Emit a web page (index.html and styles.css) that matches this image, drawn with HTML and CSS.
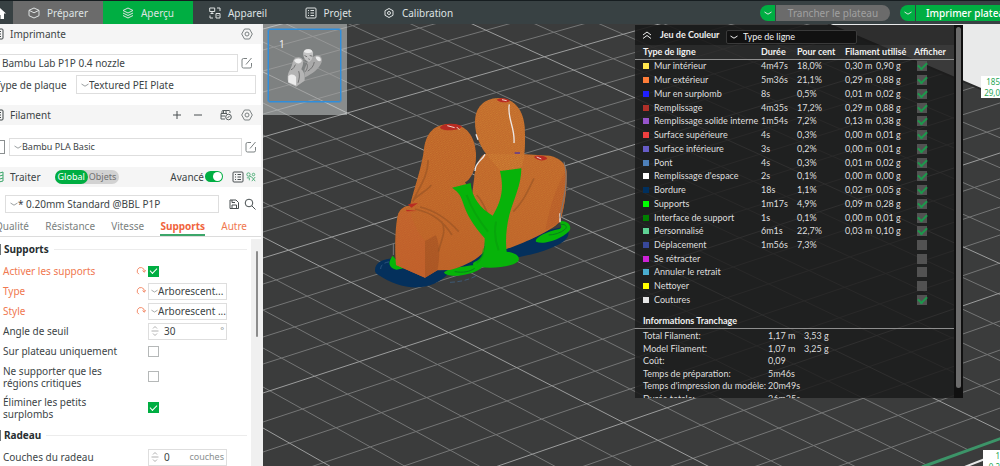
FILE: index.html
```html
<!DOCTYPE html>
<html lang="fr">
<head>
<meta charset="utf-8">
<title>Aperçu</title>
<link rel="stylesheet" href="styles.css">
</head>
<body>
<svg class="defs" aria-hidden="true">
  <symbol id="chev" viewBox="0 0 8 8"><path d="M.5 3 4 5.200 7.500 3" /></symbol>
  <symbol id="gear" viewBox="0 0 12 12"><path d="M3.500 1h5L11.300 6 8.500 11h-5L.7 6z"/><circle cx="6" cy="6" r="2"/></symbol>
  <symbol id="edit" viewBox="0 0 12 12"><path d="M6 1.500H2.500a1.500 1.500 0 0 0-1.500 1.500v6.500A1.500 1.500 0 0 0 2.500 11H9a1.500 1.500 0 0 0 1.500-1.500V6M5 7.500 10.500 1"/></symbol>
  <symbol id="reset" viewBox="0 0 12 12"><path d="M3.500 9.800A4.300 4.300 0 1 1 10 6.500M7.800 5.500 10 7.500l1.600-2.500"/></symbol>
  <symbol id="list" viewBox="0 0 12 12"><rect x="1" y="1" width="10" height="10" rx="1"/><path d="M3 3.500h1M5.500 3.500H9M3 6h1M5.500 6H9M3 8.500h1M5.500 8.500H9"/></symbol>
  <symbol id="spin" viewBox="0 0 8 14"><path d="M2 4.500 4 2.500l2 2M.5 7h7M2 9.500l2 2 2-2"/></symbol>
</svg>

<header class="topbar">
  <button class="home" aria-label="Accueil"><svg viewBox="0 0 14 14"><path d="M7 1 0 7.500h2V13h3.500V9h3v4H12V7.500h2z"/></svg></button>
  <nav class="tabs">
    <button class="tab visited"><svg class="ico" viewBox="0 0 12 12"><path d="M6 1 11 3.300v5.400L6 11 1 8.700V3.300zM1 3.300 6 5.800l5-2.500"/></svg>Préparer</button>
    <button class="tab active"><svg class="ico" viewBox="0 0 12 12"><path d="M6 1 11 3.500 6 6 1 3.500zM1 6l5 2.500L11 6M1 8.500 6 11l5-2.500"/></svg>Aperçu</button>
    <button class="tab"><svg class="ico" viewBox="0 0 12 12"><path d="M.7 1h5v3.500h-5zM3 4.500v2M1.500 6.500h3M8 1h3v3M1 8.500V11h3M7 6.500h4V11H7zM8.500 8.500h1"/></svg>Appareil</button>
    <button class="tab"><svg class="ico"><use href="#list"/></svg>Projet</button>
    <button class="tab"><svg class="ico" viewBox="0 0 12 12"><path d="M6 1.500 10 3.700v4.600L6 10.500 2 8.300V3.700z"/><circle cx="6" cy="6" r="1.500"/></svg>Calibration</button>
  </nav>
  <div class="actions">
    <div class="split"><button class="drop" aria-label="Options de tranchage"><svg class="ico8"><use href="#chev"/></svg></button><button class="main off">Trancher le plateau</button></div>
    <div class="split last"><button class="drop" aria-label="Options d’impression"><svg class="ico8"><use href="#chev"/></svg></button><button class="main">Imprimer plateau</button></div>
  </div>
</header>

<main class="work">
<aside class="side">
  <div class="strip">
    <svg class="ico stub"><use href="#list"/></svg><h2>Imprimante</h2>
    <button class="ib" aria-label="Réglages imprimante"><svg class="ico"><use href="#gear"/></svg></button>
  </div>
  <div class="printer">
    <div class="field open"><select aria-label="Imprimante"><option>Bambu Lab P1P 0.4 nozzle</option></select></div>
    <button class="ib" aria-label="Modifier l’imprimante"><svg class="ico"><use href="#edit"/></svg></button>
  </div>
  <div class="plate">
    <label for="plate">Type de plaque</label>
    <div class="field"><svg class="ico8"><use href="#chev"/></svg><select id="plate"><option>Textured PEI Plate</option></select></div>
  </div>
  <div class="strip">
    <svg class="ico stub"><use href="#list"/></svg><h2>Filament</h2>
    <button class="ib" aria-label="Ajouter"><svg class="ico dark" viewBox="0 0 12 12"><path d="M6 2v8M2 6h8"/></svg></button>
    <button class="ib minus" aria-label="Retirer"><svg class="ico dark" viewBox="0 0 12 12"><path d="M2 6h8"/></svg></button>
    <button class="ib" aria-label="AMS"><svg class="ico ams" viewBox="0 0 12 12"><path d="M2 5V2.500A1 1 0 0 1 3 1.500h6a1 1 0 0 1 1 1V4M1 4.500h6M1 4.500V10h4M1 7h4M3.500 2v2M6 2v2"/><circle cx="8.500" cy="8" r="2.800"/><path d="M7.500 9 9.700 6.800"/></svg></button>
    <button class="ib" aria-label="Réglages filament"><svg class="ico"><use href="#gear"/></svg></button>
  </div>
  <div class="filament">
    <span class="spool"></span>
    <div class="field"><svg class="ico8"><use href="#chev"/></svg><select aria-label="Filament"><option>Bambu PLA Basic</option></select></div>
    <button class="ib" aria-label="Modifier le filament"><svg class="ico"><use href="#edit"/></svg></button>
  </div>
  <div class="strip">
    <svg class="ico stub green" viewBox="0 0 12 12"><path d="M1 4 11 1v3L1 7M1 10l10-3V4M3 12l8-2V7"/></svg><h2>Traiter</h2>
    <div class="seg"><button class="on">Global</button><button>Objets</button></div>
    <label class="adv">Avancé<input type="checkbox" class="switch" checked></label>
    <button class="ib" aria-label="Liste"><svg class="ico dark"><use href="#list"/></svg></button>
    <button class="ib tight" aria-label="Comparer"><svg class="ico10 green" viewBox="0 0 12 12"><circle cx="3" cy="3" r="2"/><circle cx="9" cy="3" r="1.500"/><path d="M1 7h3v3M7 6l4 5M11 6 7 11M4 5l3 1"/></svg></button>
  </div>
  <div class="process">
    <div class="field"><svg class="ico8"><use href="#chev"/></svg><select aria-label="Traitement"><option>* 0.20mm Standard @BBL P1P</option></select></div>
    <button class="ib" aria-label="Enregistrer"><svg class="ico dark" viewBox="0 0 12 12"><path d="M2 2h6l2.500 2.500V10.500H2zM4 2v2.500h3M4 10.500V7h4.500v3.500"/></svg></button>
    <button class="ib" aria-label="Rechercher"><svg class="ico dark" viewBox="0 0 12 12"><circle cx="5" cy="5" r="3.800"/><path d="m7.800 7.800 3.700 3.700"/></svg></button>
  </div>
  <nav class="ptabs">
    <button>Qualité</button><button>Résistance</button><button>Vitesse</button><button class="cur">Supports</button><button class="mod">Autre</button>
  </nav>
  <div class="params">
    <div class="plist">
      <h3>Supports</h3>
      <div class="row mod"><label for="p1">Activer les supports</label><svg class="ico rst"><use href="#reset"/></svg><input type="checkbox" class="tick" id="p1" checked></div>
      <div class="row mod"><label for="p2">Type</label><svg class="ico rst"><use href="#reset"/></svg><div class="field"><svg class="ico8"><use href="#chev"/></svg><select id="p2"><option>Arborescent...</option></select></div></div>
      <div class="row mod"><label for="p3">Style</label><svg class="ico rst"><use href="#reset"/></svg><div class="field"><svg class="ico8"><use href="#chev"/></svg><select id="p3"><option>Arborescent ...</option></select></div></div>
      <div class="row"><label for="p4">Angle de seuil</label><div class="field"><svg class="spin"><use href="#spin"/></svg><input type="text" id="p4" value="30"><span class="unit">°</span></div></div>
      <div class="row"><label for="p5">Sur plateau uniquement</label><input type="checkbox" class="tick" id="p5"></div>
      <div class="row two"><label for="p6">Ne supporter que les régions critiques</label><input type="checkbox" class="tick" id="p6"></div>
      <div class="row two"><label for="p7">Éliminer les petits surplombs</label><input type="checkbox" class="tick" id="p7" checked></div>
      <h3>Radeau</h3>
      <div class="row"><label for="p8">Couches du radeau</label><div class="field"><svg class="spin"><use href="#spin"/></svg><input type="text" id="p8" value="0"><span class="unit">couches</span></div></div>
    </div>
    <div class="gutter"><i></i></div>
  </div>
</aside>

<section class="view">
  <svg class="scene" viewBox="263 24 737 442" preserveAspectRatio="xMinYMin slice" aria-hidden="true">
    <defs>
      <pattern id="layers" width="9" height="7" patternUnits="userSpaceOnUse" patternTransform="rotate(-10)"><path d="M0 1.500h5M4 5h5" stroke="#e0a040" stroke-width="2" opacity=".6"/></pattern>
      <linearGradient id="fade" x1="0" y1="0" x2="0" y2="1"><stop offset="0" stop-color="#fff"/><stop offset=".55" stop-color="#aaa"/><stop offset="1" stop-color="#222"/></linearGradient>
      <mask id="soft" maskUnits="userSpaceOnUse" x="0" y="30" width="660" height="560"><rect x="0" y="30" width="660" height="560" fill="url(#fade)"/></mask>
      <path id="torso" d="M345 260C350 235 360 215 374 207L495 208 570 212C600 220 618 235 620 260 622 320 610 380 600 410 570 440 500 470 440 492L375 480 335 340z"/>
      <path id="left" d="M150 362C165 300 185 250 192 192 198 145 222 117 270 117 320 117 345 155 348 205 350 255 330 285 315 292L345 340 378 410 372 500C350 525 310 545 270 555L232 556 195 578 108 540C104 490 105 420 115 385 122 370 135 362 150 362z"/>
      <path id="head" d="M345 110C345 70 370 40 415 39 467 39 490 80 494 125 497 175 494 220 486 245L455 258 422 258 385 215C360 185 345 150 345 110z"/>
    </defs>
    <rect x="263" y="24" width="737" height="442" fill="#3b3c3c"/>
    <path class="minor" d="M263-172 1003 139M263-148 1003 169M263-123 1003 200M263-97 1003 232M263-44 1003 296M263-16 1003 328M263 13 1003 362M263 42 1003 396M263 103 1003 467M263 135 1003 503M263 168 1003 541M263 202 1003 579M263 273 1003 661M263 310 1003 706M263 348 1003 752M263 387 1003 800"/>
    <path class="minor" d="M263 50 1003-151M263 71 1003-132M263 92 1003-113M263 114 1003-94M263 160 1003-54M263 184 1003-33M263 208 1003-12M263 232 1003 10M263 284 1003 55M263 310 1003 78M263 337 1003 102M263 364 1003 127M263 422 1003 178M263 452 1003 206M263 483 1003 234M263 514 1003 262M263 578 1003 320M263 610 1003 349M263 642 1003 378M263 674 1003 407"/>
    <path class="major" d="M263-71 1003 265M263 72 1003 432M263 237 1003 618M263 428 1003 850M263 29 1003-169M263 137 1003-74M263 258 1003 32M263 393 1003 152M263 547 1003 292"/>
    <path d="M828 24 1000 97V24z" fill="#e9eaea"/>
    <path d="M828 24 1000 97" stroke="#2a2b2b" stroke-width="2"/>
    <path d="M922 468 1002 438V468z" fill="#3b3c3c"/>
    <path d="M922 467 1002 438" stroke="#3c9468" stroke-width="3"/>
    <path d="M962 468 985 459" stroke="#e8e8e8" stroke-width="2"/>
    <g transform="translate(360 85) scale(.33333)">
      <path d="M45 555C45 533 67 521 105 519L405 479C485 469 535 439 595 429 625 426 633 441 619 461 599 485 539 503 479 516 419 524 397 514 369 536 329 554 299 558 274 558 254 578 224 606 174 607 134 609 89 592 59 572 45 564 45 560 45 555z" fill="#04305c"/>
      <path d="M62 552C62 538 76 530 96 530M270 592C310 590 330 582 350 572" stroke="#3f6690" stroke-width="2" fill="none" stroke-dasharray="14 8"/>
      <path d="M98 512C82 532 86 550 110 554L130 550zM528 470C522 458 560 440 598 432 612 428 594 412 604 408 622 408 634 420 630 434 616 456 556 482 528 470zM252 562C270 546 336 542 366 536 376 550 340 568 296 572 272 574 254 570 252 562z" fill="#06b508"/>
      <path d="M598 420C614 414 624 424 616 432 604 444 580 450 566 450M284 560C310 564 330 560 344 550" fill="none" stroke="#0a7d1c" stroke-width="3"/>
      <use href="#torso" fill="#bf652a"/>
      <use href="#head" fill="#c0682b"/>
      <use href="#left" fill="#bd6228"/>
      <path d="M118 385C108 430 106 490 108 540L195 578V468C170 440 160 410 148 375z" fill="#c05f2b"/>
      <path d="M195 468 228 450C240 480 240 520 232 556L195 578z" fill="#ab5524"/>
      <path d="M616 260C590 300 570 360 556 436L598 412C612 370 622 320 616 260z" fill="#b85c28"/>
      <g mask="url(#soft)"><use href="#torso" fill="url(#layers)"/><use href="#head" fill="url(#layers)"/><use href="#left" fill="url(#layers)"/></g>
      <path d="M204 225C206 270 176 310 158 350M160 345C180 325 200 318 214 300M165 372C220 384 250 410 276 450M180 366C230 378 270 410 296 440M245 410C262 440 240 470 236 500M522 280C502 320 490 350 460 380M350 330C370 350 374 370 388 396" stroke="#8e4d22" stroke-width="5" fill="none" opacity=".5"/>
      <path d="M240 128C246 114 290 112 306 124 300 138 250 140 240 128zM410 44C420 38 444 38 450 48 442 54 420 54 410 44zM522 216C530 208 556 212 562 220 554 230 532 228 522 216zM144 358 174 354 154 368zM138 374 172 378 140 379z" fill="#b82b22"/>
      <path d="M262 122 284 128M426 44 440 47M530 216 544 222M290 126 298 134" stroke="#efd5cc" stroke-width="3"/>
      <path d="M448 58C440 98 466 128 462 174M375 208C365 228 345 232 345 258M348 148 354 164M600 385V412" fill="none" stroke="#ece6e4" stroke-width="4"/>
      <path d="M612 230C630 290 606 350 600 400M100 474V510" fill="none" stroke="#77777a" stroke-width="3"/>
      <path d="M464 204H480" stroke="#5133a0" stroke-width="4"/>
      <path d="M276 308 332 294C336 340 362 370 398 392 430 340 430 300 420 258L484 250C484 300 462 340 448 390 438 430 436 470 440 500 466 503 480 514 476 526 466 545 400 552 360 546 335 545 335 535 345 530 370 520 374 505 374 460 340 420 320 390 308 350 300 325 290 318 276 308z" fill="#07b30a"/>
      <path d="M372 490C368 512 366 522 350 534M408 410C402 440 406 470 416 496M320 330C334 370 360 410 384 440" stroke="#089c0c" stroke-width="6" fill="none" opacity=".6"/>
    </g>
  </svg>

  <button class="thumb" aria-label="Plateau 1">
    <span class="thumb-in"><span>1</span>
      <svg viewBox="0 0 114 126" aria-hidden="true"><path d="M54 62 66 34 88 20C102 16 112 28 106 42 98 62 78 76 54 88z" fill="#a9a9a9"/><path d="M50 12C52-4 76-4 80 10 82 24 76 36 68 40 56 36 50 26 50 12z" fill="#c4c4c4"/><path d="M8 66C16 52 16 44 20 34 26 22 48 22 50 38 50 50 46 56 44 62 54 70 56 86 54 98L28 116 4 104C0 88 2 76 8 66z" fill="#b4b4b4"/><path d="M52 8C56-2 76-2 78 8 70 14 60 14 52 8zM22 36C28 26 44 28 46 36 42 46 30 48 22 36zM4 84C10 76 22 76 28 86L28 112 4 102zM88 24C98 20 106 26 104 36 96 40 90 34 88 24z" fill="#ececec"/><path d="M12 64C22 60 22 54 26 48M54 20 62 24M70 20 78 22M66 30 70 32M60 44C66 52 62 62 56 70M84 40C82 52 76 60 64 68M36 68C40 80 38 92 34 104" stroke="#707070" stroke-width="3" fill="none"/></svg>
    </span>
  </button>
  <div class="coord top"><div>185</div><div>29,0</div></div>
  <div class="coord bottom"><div>1</div><div>0,2</div></div>

  <div class="legend">
    <div class="lbody">
      <div class="lhead">
        <button class="fold" aria-label="Replier"><svg class="ico" viewBox="0 0 12 12"><path d="M2 6l4-3 4 3M2 9.500l4-3 4 3"/></svg></button>
        <label for="scheme">Jeu de Couleur</label>
        <div class="lsel"><svg class="ico8"><use href="#chev"/></svg><select id="scheme"><option>Type de ligne</option></select></div>
      </div>
      <table class="lines">
        <colgroup><col><col class="c2"><col class="c3"><col class="c4"><col class="c5"><col class="c6"></colgroup>
        <thead><tr><th>Type de ligne</th><th>Durée</th><th>Pour cent</th><th colspan="2">Filament utilisé</th><th>Afficher</th></tr></thead>
        <tbody>
        <tr><td><i class="k1"></i>Mur intérieur</td><td>4m47s</td><td>18,0%</td><td>0,30 m</td><td>0,90 g</td><td><input type="checkbox" aria-label="Mur intérieur" checked></td></tr>
        <tr><td><i class="k2"></i>Mur extérieur</td><td>5m36s</td><td>21,1%</td><td>0,29 m</td><td>0,88 g</td><td><input type="checkbox" aria-label="Mur extérieur" checked></td></tr>
        <tr><td><i class="k3"></i>Mur en surplomb</td><td>8s</td><td>0,5%</td><td>0,01 m</td><td>0,02 g</td><td><input type="checkbox" aria-label="Mur en surplomb" checked></td></tr>
        <tr><td><i class="k4"></i>Remplissage</td><td>4m35s</td><td>17,2%</td><td>0,29 m</td><td>0,88 g</td><td><input type="checkbox" aria-label="Remplissage" checked></td></tr>
        <tr><td><i class="k5"></i>Remplissage solide interne</td><td>1m54s</td><td>7,2%</td><td>0,13 m</td><td>0,38 g</td><td><input type="checkbox" aria-label="Remplissage solide interne" checked></td></tr>
        <tr><td><i class="k6"></i>Surface supérieure</td><td>4s</td><td>0,3%</td><td>0,00 m</td><td>0,01 g</td><td><input type="checkbox" aria-label="Surface supérieure" checked></td></tr>
        <tr><td><i class="k7"></i>Surface inférieure</td><td>3s</td><td>0,2%</td><td>0,00 m</td><td>0,01 g</td><td><input type="checkbox" aria-label="Surface inférieure" checked></td></tr>
        <tr><td><i class="k8"></i>Pont</td><td>4s</td><td>0,3%</td><td>0,01 m</td><td>0,02 g</td><td><input type="checkbox" aria-label="Pont" checked></td></tr>
        <tr><td><i class="k9"></i>Remplissage d'espace</td><td>2s</td><td>0,1%</td><td>0,00 m</td><td>0,00 g</td><td><input type="checkbox" aria-label="Remplissage d'espace" checked></td></tr>
        <tr><td><i class="k10"></i>Bordure</td><td>18s</td><td>1,1%</td><td>0,02 m</td><td>0,05 g</td><td><input type="checkbox" aria-label="Bordure" checked></td></tr>
        <tr><td><i class="k11"></i>Supports</td><td>1m17s</td><td>4,9%</td><td>0,09 m</td><td>0,28 g</td><td><input type="checkbox" aria-label="Supports" checked></td></tr>
        <tr><td><i class="k12"></i>Interface de support</td><td>1s</td><td>0,1%</td><td>0,00 m</td><td>0,01 g</td><td><input type="checkbox" aria-label="Interface de support" checked></td></tr>
        <tr><td><i class="k13"></i>Personnalisé</td><td>6m1s</td><td>22,7%</td><td>0,03 m</td><td>0,10 g</td><td><input type="checkbox" aria-label="Personnalisé" checked></td></tr>
        <tr><td><i class="k14"></i>Déplacement</td><td>1m56s</td><td>7,3%</td><td></td><td></td><td><input type="checkbox" aria-label="Déplacement"></td></tr>
        <tr><td><i class="k15"></i>Se rétracter</td><td></td><td></td><td></td><td></td><td><input type="checkbox" aria-label="Se rétracter"></td></tr>
        <tr><td><i class="k16"></i>Annuler le retrait</td><td></td><td></td><td></td><td></td><td><input type="checkbox" aria-label="Annuler le retrait"></td></tr>
        <tr><td><i class="k17"></i>Nettoyer</td><td></td><td></td><td></td><td></td><td><input type="checkbox" aria-label="Nettoyer"></td></tr>
        <tr><td><i class="k18"></i>Coutures</td><td></td><td></td><td></td><td></td><td><input type="checkbox" aria-label="Coutures" checked></td></tr>
        </tbody>
      </table>
      <h3>Informations Tranchage</h3>
      <table class="info">
        <colgroup><col class="d1"><col class="d2"><col></colgroup>
        <tbody>
        <tr><td>Total Filament:</td><td>1,17 m</td><td>3,53 g</td></tr>
        <tr><td>Model Filament:</td><td>1,07 m</td><td>3,25 g</td></tr>
        <tr><td>Coût:</td><td>0,09</td><td></td></tr>
        <tr><td>Temps de préparation:</td><td>5m46s</td><td></td></tr>
        <tr><td>Temps d'impression du modèle:</td><td>20m49s</td><td></td></tr>
        <tr><td>Durée totale:</td><td>26m35s</td><td></td></tr>
        </tbody>
      </table>
    </div>
    <div class="lscroll"><i></i></div>
  </div>
</section>
</main>
</body>
</html>
```

FILE: styles.css
```css
* { box-sizing: border-box; }
body { margin: 0; height: 100vh; display: flex; flex-direction: column; overflow: hidden; font: 10px/12px "Noto Sans", "Open Sans", sans-serif; color: #3c4446; }
button, input, select { font: inherit; color: inherit; margin: 0; padding: 0; border: 0; background: none; border-radius: 0; }
select { appearance: none; min-width: 0; flex: 1; outline: 0; }
h2, h3 { margin: 0; font-size: inherit; font-weight: 400; }
svg { fill: none; stroke: currentColor; flex: none; }
.defs { display: none; }
.ico { width: 12px; height: 12px; }
.ico8 { width: 8px; height: 8px; }
.ico10 { width: 10px; height: 10px; }

.topbar { flex: none; height: 24px; display: flex; background: #384143; border-top: 1px solid #161d20; color: #dfe3e3; }
.home { width: 13px; overflow: hidden; display: flex; align-items: center; justify-content: flex-end; padding-right: 7px; }
.home svg { width: 14px; height: 14px; fill: #fff; stroke: none; }
.tabs { display: flex; }
.tab { width: 90px; display: flex; align-items: center; justify-content: center; gap: 7px; white-space: nowrap; }
.visited { background: #6b6b6b; }
.active { background: #00ae42; }
.actions { flex: 1; display: flex; justify-content: flex-end; align-items: center; gap: 10px; overflow: hidden; }
.split { display: flex; height: 16px; gap: 1px; border-radius: 8px; overflow: hidden; flex: none; width: 130px; }
.split .drop { flex: none; width: 15px; background: #00ae42; display: flex; align-items: center; justify-content: center; }
.split .main { flex: 1; background: #00ae42; color: #fff; white-space: nowrap; }
.split .off { background: #6b6b6b; color: #a0a0a0; }
.split.last { width: 100px; border-radius: 8px 0 0 8px; }
.last .main { text-align: left; padding-left: 10px; font-weight: 500; }

.work { flex: 1; min-height: 0; display: flex; }
.side { flex: none; width: 263px; background: #fff; overflow: hidden; display: flex; flex-direction: column; border-right: 2px solid #f0f0f0; }
.strip { height: 20px; display: flex; align-items: center; background: #f5f5f5; padding: 0 8px 1px 0; gap: 9px; flex: none; }
.strip h2 { flex: 1; }
.stub { margin-left: -8px; margin-right: -3px; }
.ib { display: flex; align-items: center; color: #7b8182; }
.dark { color: #484f51; }
.green { color: #3ca66a; }
.minus { margin-right: 7px; }
.ams { color: #555c5e; }
.tight { margin-left: -7px; }
.field { display: flex; align-items: center; border: 1px solid #dedede; height: 18px; background: #fff; min-width: 0; flex: 1; }
.field .ico8 { margin-left: 4px; color: #9a9fa0; }
.field select, .field input { min-width: 0; width: 100%; height: 16px; flex: 1; white-space: nowrap; overflow: hidden; }
.printer { display: flex; align-items: center; gap: 3px; margin-top: 10px; padding-right: 8px; }
.open { border-left: 0; padding-left: 2px; }
.plate { display: flex; align-items: center; margin: 3px 5px 11px -5px; }
.plate label { width: 81px; white-space: nowrap; }
.plate .field { height: 19px; }
.filament { display: flex; align-items: center; gap: 4px; margin: 13px 4px 11px 0; font-size: 9px; }
.filament .ib { margin-left: -1px; }
.spool { width: 5px; height: 14px; border: 1px solid #8b8f90; border-left: 0; }
.seg { display: flex; background: #d2d2d2; border-radius: 7px; height: 14px; font-size: 9px; color: #6f6f6f; }
.seg button { padding: 0 3px 0 1px; }
.seg .on { background: #00ae42; color: #fff; border-radius: 7px; padding: 0 3px; }
.strip:has(.seg) { padding-right: 5px; }
.strip:has(.seg) h2 { flex: none; margin-right: 5px; }
.adv { display: flex; align-items: center; gap: 1px; margin-left: auto; }
.switch { appearance: none; width: 18px; height: 11px; border-radius: 6px; background: #00ae42; display: flex; justify-content: flex-end; padding: 1px; }
.switch::after { content: ""; width: 9px; height: 9px; border-radius: 50%; background: #fff; }
.process { display: flex; align-items: center; gap: 4px; margin: 8px 5px 0 5px; }
.process .field { margin-right: 5px; }
.ptabs { display: flex; justify-content: space-between; height: 24px; margin-left: -5px; padding-right: 14px; border-bottom: 1px solid #dcdcdc; color: #7a7f80; flex: none; }
.ptabs button { padding-top: 5px; border-bottom: 2px solid transparent; }
.ptabs .cur { color: #f0643c; font-weight: 700; border-color: #3ca66a; }
.mod, .ptabs .mod { color: #f07850; }
.params { flex: 1; min-height: 0; display: flex; overflow: hidden; }
.plist { flex: 1; }
.plist h3 { height: 24px; display: flex; align-items: center; gap: 5px; font-weight: 700; color: #262e30; padding-right: 4px; }
.plist h3::before { content: ""; width: 1px; height: 11px; background: #70777a; margin-right: -2px; }
.plist h3::after { content: ""; flex: 1; height: 1px; background: #ececec; }
.row { height: 20px; display: flex; align-items: center; padding: 0 24px 0 3px; }
.row.two { height: 31px; }
.row label { width: 133px; }
.row.two label { padding-right: 28px; }
.row:not(.two) > label { white-space: nowrap; }
.row > :nth-child(2):not(.rst) { margin-left: 12px; }
.rst { width: 10px; height: 10px; margin-right: 2px; color: #f07850; }
.row .field { color: #3c4446; height: 17px; }
.row select, .row input[type=text] { height: 15px; }
.row .field .ico8 { width: 7px; margin: 0 0 0 2px; }
.spin { width: 8px; height: 14px; margin: 0 5px 0 2px; color: #b0b0b0; }
.unit { color: #8a8f90; font-size: 9px; padding-right: 2px; }
.tick { appearance: none; width: 11px; height: 11px; border: 1px solid #b5b8b8; flex: none; display: grid; place-items: center; }
.tick:checked { background: #00ae42; border-color: #00ae42; }
.tick:checked::after { content: ""; width: 6px; height: 3px; border: solid #fff; border-width: 0 0 1px 1px; transform: rotate(-45deg); margin-bottom: 2px; }
.gutter { width: 10px; background: #f0f0f0; margin-top: 2px; padding: 12px 3px 0 5px; }
.gutter i { display: block; height: 86px; background: #8c8c8c; border-radius: 1px; }

.view { flex: 1; position: relative; overflow: hidden; background: #3b3c3c; }
.scene { position: absolute; inset: 0; width: 100%; height: 100%; stroke: none; }
.minor { stroke: #757676; stroke-width: 1; }
.major { stroke: #9c9d9d; stroke-width: 1; }
.thumb { position: absolute; left: 0; top: 0; width: 84px; height: 91px; background: #d8dcdc80; padding: 5px 6px 13px 5px; display: flex; }
.thumb-in { flex: 1; border: 1px solid #2f8edc; outline: 1px solid #2f8edc80; border-radius: 2px; background: #60606040; color: #eee; display: flex; align-items: flex-start; padding: 8px 0 0 10px; position: relative; }
.thumb svg { position: absolute; left: 18px; top: 19px; width: 37px; height: 41px; stroke: none; }
.coord { position: absolute; right: 0; background: #fff; color: #1fa653; font-size: 8px; line-height: 11px; text-align: right; width: 19px; }
.coord.top { top: 52px; }
.coord.bottom { top: 426px; width: 17px; }

.legend { position: absolute; right: 37px; top: 1px; width: 328px; height: 373px; display: flex; background: #1b1b1bd9; color: #dedede; font: 9px/12px Lato, "Noto Sans", sans-serif; overflow: hidden; }
.lbody { flex: 1; overflow: hidden; }
.lhead { height: 20px; display: flex; align-items: center; background: #1414144d; padding-left: 6px; font-weight: 700; color: #f0f0f0; }
.fold { display: flex; margin-right: 7px; }
.lhead label { width: 66px; white-space: nowrap; }
.lsel { display: flex; align-items: center; gap: 5px; width: 131px; height: 14px; margin-top: 3px; padding-left: 3px; background: #111; border: 1px solid #3a3a3a; border-radius: 2px; font-weight: 400; }
.lines, .info { border-collapse: collapse; table-layout: fixed; width: 100%; }
th, td { padding: 0; text-align: left; white-space: nowrap; line-height: 12px; }
.lines { height: 262px; }
.lines thead tr { height: 14px; border-bottom: 1px solid #8e8e8e; color: #f2f2f2; background: #3a3a3a66; }
.lines th:first-child, .info td:first-child { padding-left: 8px; }
.lines td:first-child { padding-left: 8px; }
.lines td i { display: inline-block; width: 6px; height: 6px; margin-right: 5px; }
.c2 { width: 36px; } .c3 { width: 48px; } .c4 { width: 31px; } .c5 { width: 38px; } .c6 { width: 40px; }
.lines td:last-child { padding-left: 3px; }
.lines input { appearance: none; display: grid; place-items: center; width: 10px; height: 10px; background: #525252; }
.lines input:checked::after { content: ""; width: 7px; height: 4px; border: solid #1c9a4c; border-width: 0 0 2px 2px; transform: rotate(-45deg); margin-bottom: 2px; }
.legend h3 { height: 21px; margin-top: 1px; padding: 7px 8px 0; font-weight: 700; color: #f0f0f0; border-bottom: 1px solid #8e8e8e; }
.info { height: 75px; margin-top: 1px; }
.d1 { width: 133px; } .d2 { width: 36px; }
.lscroll { width: 9px; background: #101010; padding: 2px 2px 10px; }
.lscroll i { display: block; height: 100%; background: #6c6c6c; border-radius: 3px; }
.k1 { background: #ffe64d; } .k2 { background: #ff7d38; } .k3 { background: #1f1fff; } .k4 { background: #b03029; }
.k5 { background: #9654cc; } .k6 { background: #f04040; } .k7 { background: #665cc7; } .k8 { background: #4d80ba; }
.k9 { background: #fff; } .k10 { background: #00305f; } .k11 { background: #0f0; } .k12 { background: #008000; }
.k13 { background: #5ed194; } .k14 { background: #38489b; } .k15 { background: #cd22d6; } .k16 { background: #49add0; }
.k17 { background: #ff0; } .k18 { background: #e6e6e6; }
```
